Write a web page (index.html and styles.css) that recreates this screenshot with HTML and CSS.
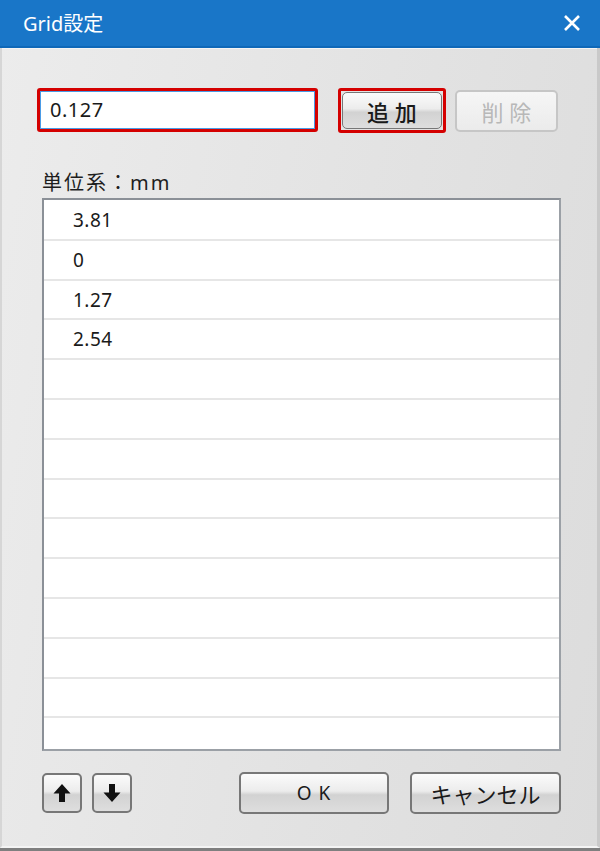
FILE: index.html
```html
<!DOCTYPE html>
<html lang="ja">
<head>
<meta charset="utf-8">
<link rel="stylesheet" href="styles.css">
</head>
<body>
<div class="window">
  <div class="titlebar">
    <span class="title">Grid設定</span>
    <svg class="close" width="18" height="18" viewBox="0 0 18 18"><path d="M2 2 L16 16 M16 2 L2 16" stroke="#fff" stroke-width="2.6" fill="none"/></svg>
  </div>
  <div class="content">
    <div class="toprow">
      <div class="hl input-hl"><div class="input">0.127</div></div>
      <div class="hl btn-hl"><div class="btn add">追 加</div></div>
      <div class="btn del">削 除</div>
    </div>
    <div class="label">単位系：mm</div>
    <div class="list">
      <div class="row">3.81</div>
      <div class="row">0</div>
      <div class="row">1.27</div>
      <div class="row">2.54</div>
      <div class="row"></div>
      <div class="row"></div>
      <div class="row"></div>
      <div class="row"></div>
      <div class="row"></div>
      <div class="row"></div>
      <div class="row"></div>
      <div class="row"></div>
      <div class="row"></div>
      <div class="row last"></div>
    </div>
    <div class="bottomrow">
      <div class="btn arrow"><svg width="22" height="22" viewBox="0 0 22 22"><path d="M11 2 L19.5 11.5 L14 11.5 L14 20 L8 20 L8 11.5 L2.5 11.5 Z" fill="#111"/></svg></div>
      <div class="btn arrow"><svg width="22" height="22" viewBox="0 0 22 22"><path d="M11 20 L19.5 10.5 L14 10.5 L14 2 L8 2 L8 10.5 L2.5 10.5 Z" fill="#111"/></svg></div>
      <div class="spacer"></div>
      <div class="btn ok">O K</div>
      <div class="btn cancel">キャンセル</div>
    </div>
  </div>
</div>
</body>
</html>
```
FILE: styles.css
```css
html, body {
  margin: 0;
  padding: 0;
  background: #7f7f7f;
}
body {
  width: 600px;
  height: 851px;
  font-family: "Noto Sans", "Noto Sans CJK JP", sans-serif;
}
.window {
  width: 600px;
  height: 848px;
  box-sizing: border-box;
  border-left: 2px solid #d6d6d6;
  border-right: 3px solid #c9c9c9;
  background: linear-gradient(100deg, #ececec 0%, #e2e2e2 60%, #dcdcdc 100%);
  display: flex;
  flex-direction: column;
  border-bottom: 2px solid #f4f4f4;
}
.titlebar {
  height: 46px;
  margin: 0 -3px 0 -2px;
  background: #1976c8;
  border-bottom: 2px solid #0f68b8;
  display: flex;
  align-items: center;
  padding: 0 19px 0 23px;
  box-sizing: content-box;
  flex: none;
}
.title {
  color: #fff;
  font-size: 20px;
  flex: 1;
  position: relative;
  top: -1px;
}
.close {
  display: block;
}
.content {
  flex: 1;
  display: flex;
  flex-direction: column;
  padding: 39px 39px 0 35px;
  border-top: 1px solid #f4f4f4;
}
.toprow {
  display: flex;
  align-items: flex-start;
}
.hl {
  border: 3px solid #d40000;
  border-radius: 3px;
  box-sizing: border-box;
}
.input-hl {
  width: 283px;
  height: 44px;
}
.input {
  height: 100%;
  box-sizing: border-box;
  background: #fff;
  border: 1px solid #4a9be6;
  font-size: 20px;
  letter-spacing: 0.5px;
  color: #1a1a1a;
  padding: 5px 0 0 9px;
  line-height: 26px;
}
.btn-hl {
  margin-left: 20px;
  width: 108px;
  height: 45px;
  padding: 1px;
}
.btn {
  box-sizing: border-box;
  border: 2px solid #777;
  border-radius: 5px;
  background: linear-gradient(#fbfbfb 0%, #ececec 45%, #d2d2d2 55%, #dedede 100%);
  display: flex;
  align-items: center;
  justify-content: center;
  font-size: 18px;
  color: #1a1a1a;
}
.add {
  height: 100%;
  border-width: 1px;
  font-size: 22px;
  padding-top: 1px;
  font-weight: 500;
}
.del {
  margin: 2px 0 0 9px;
  width: 104px;
  height: 42px;
  border-color: #c6c6c6;
  color: #b8b8b8;
  background: linear-gradient(#f6f6f6, #ebebeb);
  font-size: 22px;
}
.label {
  margin: 37px 0 3px 5px;
  font-size: 20px;
  letter-spacing: 2px;
  color: #1e1e1e;
  line-height: 25px;
}
.list {
  margin: 0 0 0 5px;
  width: 519px;
  height: 553px;
  box-sizing: border-box;
  background: #fff;
  border: 2px solid #8b9097;
  border-right-color: #9ba0a6;
  border-bottom-color: #9ba0a6;
  overflow: hidden;
  padding-top: 1px;
}
.row {
  height: 39.8px;
  box-sizing: border-box;
  border-bottom: 2px solid #e6e6e6;
  font-size: 19px;
  letter-spacing: 0.5px;
  color: #1a1a1a;
  padding-left: 29px;
  line-height: 38px;
}
.bottomrow {
  display: flex;
  align-items: center;
  margin: 21px 0 0 5px;
  width: 519px;
}
.arrow {
  width: 40px;
  height: 40px;
  border-radius: 5px;
  margin-right: 10px;
}
.spacer {
  flex: 1;
}
.ok {
  width: 150px;
  height: 42px;
  margin-right: 21px;
  font-size: 19px;
  letter-spacing: 1px;
}
.cancel {
  width: 151px;
  height: 42px;
  font-size: 22px;
}
```
